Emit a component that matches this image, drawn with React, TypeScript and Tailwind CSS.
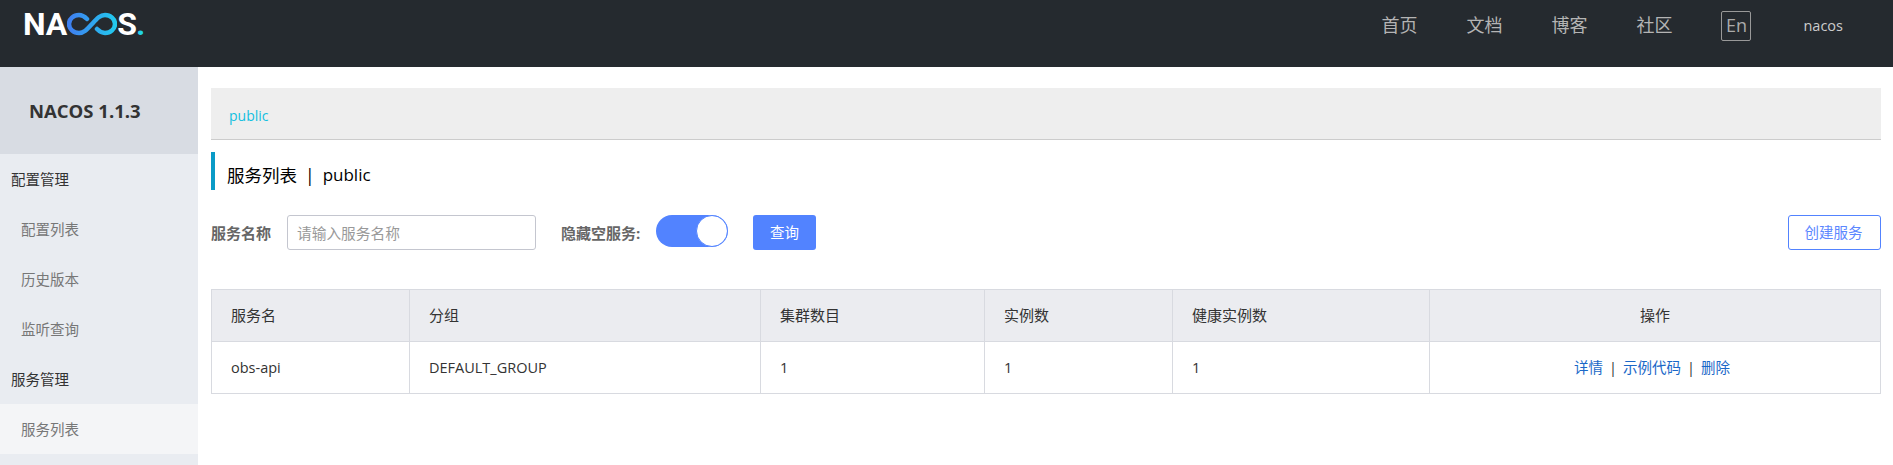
const NAV_ITEMS = ["首页", "文档", "博客", "社区"];

const COLUMNS = [
  { label: "服务名", value: "obs-api", width: "w-[198px]" },
  { label: "分组", value: "DEFAULT_GROUP", width: "w-[351px]" },
  { label: "集群数目", value: "1", width: "w-[224px]" },
  { label: "实例数", value: "1", width: "w-[188px]" },
  { label: "健康实例数", value: "1", width: "w-[257px]" },
];

function Logo() {
  return (
    <div className="flex h-[24px] items-center font-['Roboto',sans-serif] text-[32px] font-bold leading-none text-white">
      <span>NA</span>
      <svg width="50" height="24" viewBox="0 0 50 24" fill="none" className="shrink-0">
        <defs>
          <linearGradient id="loop" x1="0" x2="1" y1="0" y2="0">
            <stop offset="0" stopColor="#3f7ff0" />
            <stop offset="1" stopColor="#22c8ee" />
          </linearGradient>
        </defs>
        <path
          d="M20 7C17.500 4.500 15.500 3 12 3 6.500 3 2 7 2 12s4.500 9 10 9c5 0 8-3.500 13-9s8-9 13-9c5.500 0 10 4 10 9s-4.500 9-10 9c-3.500 0-5.500-1.500-8-4"
          stroke="url(#loop)"
          strokeWidth="4.500"
          strokeLinecap="round"
        />
      </svg>
      <span>S</span>
      <span className="-ml-[1px] text-[#22d3e6]">.</span>
    </div>
  );
}

function SideItem({ label, active }: { label: string; active?: boolean }) {
  return (
    <div className={`flex h-[50px] items-center pl-[21px] pt-[1px] text-[#777] ${active ? "bg-[#f4f5f7]" : ""}`}>
      {label}
    </div>
  );
}

function SideGroup({ label }: { label: string }) {
  return <div className="flex h-[50px] items-center pl-[11px] pt-[1px] text-[#333]">{label}</div>;
}

export default function App() {
  return (
    <div className="flex h-[465px] flex-col overflow-hidden bg-white font-['Open_Sans','Noto_Sans_CJK_SC',sans-serif] text-[14.500px] text-[#333]">
      <header className="flex h-[67px] shrink-0 items-start justify-between bg-[#252a2f]">
        <div className="ml-[23px] mt-[12px]">
          <Logo />
        </div>
        <nav className="flex h-[51px] items-center text-[#b4b4b4]">
          {NAV_ITEMS.map((item) => (
            <a key={item} className="mr-[49px] text-[18px]">
              {item}
            </a>
          ))}
          <span className="mr-[52px] flex h-[30px] w-[30px] items-center justify-center rounded-[2px] border border-[#999] text-[18px] text-[#aaa]">
            En
          </span>
          <span className="mr-[50px] text-[14.500px] text-[#ccc]">nacos</span>
        </nav>
      </header>

      <div className="flex min-h-0 flex-1">
        <aside className="w-[198px] shrink-0 bg-[#e9ecf1]">
          <div className="flex h-[87px] items-center bg-[#d8dce3] pl-[29px] text-[18.500px] font-bold">NACOS 1.1.3</div>
          <SideGroup label="配置管理" />
          <SideItem label="配置列表" />
          <SideItem label="历史版本" />
          <SideItem label="监听查询" />
          <SideGroup label="服务管理" />
          <SideItem label="服务列表" active />
        </aside>

        <main className="min-w-0 flex-1 pl-[13px] pr-[12px] pt-[21px]">
          <div className="flex h-[52px] items-center border-b border-[#ccc] bg-[#eee] pl-[18px] pt-[4px] text-[14px] text-[#12bfe0]">
            public
          </div>

          <h1 className="mt-[12px] flex h-[38px] items-center border-l-[4px] border-[#0a9bc7] pl-[12px] pt-[8px] text-[17.500px] font-normal text-black">
            服务列表<span className="mx-[8px] text-[#000]">|</span>
            <span className="text-[17px]">public</span>
          </h1>

          <div className="mt-[25px] flex h-[35px] items-start">
            <label className="mt-[7px] w-[76px] text-[15px] font-bold text-[#666]">服务名称</label>
            <input
              placeholder="请输入服务名称"
              className="h-[35px] w-[249px] rounded-[3px] border border-[#c4c6cf] pl-[9px] pr-[10px] text-[14.700px] outline-none placeholder:text-[#999]"
            />
            <label className="ml-[25px] mt-[7px] w-[95px] text-[15px] font-bold text-[#666]">隐藏空服务:</label>
            <div className="flex h-[32px] w-[72px] justify-end rounded-full bg-[#5283ff]">
              <span className="h-[32px] w-[32px] rounded-full border border-[#5283ff] bg-white" />
            </div>
            <button className="ml-[25px] h-[35px] w-[63px] rounded-[3px] bg-[#5283ff] text-white">查询</button>
            <button className="ml-auto h-[35px] w-[93px] rounded-[3px] border border-[#5283ff] pr-[2px] text-[#5b87ff]">
              创建服务
            </button>
          </div>

          <table className="mt-[39px] w-[1670px] table-fixed border-collapse">
            <thead>
              <tr className="h-[52px] bg-[#ebecf0]">
                {COLUMNS.map((col) => (
                  <th key={col.label} className={`${col.width} border border-[#d8dae0] pl-[19px] text-left text-[15px] font-normal`}>
                    {col.label}
                  </th>
                ))}
                <th className="border border-[#d8dae0] text-center text-[15px] font-normal">操作</th>
              </tr>
            </thead>
            <tbody>
              <tr className="h-[52px]">
                {COLUMNS.map((col) => (
                  <td key={col.label} className="border border-[#d8dae0] pl-[19px]">
                    {col.value}
                  </td>
                ))}
                <td className="border border-[#d8dae0] pr-[6px] text-center">
                  <a className="text-[#1a68c8]">详情</a>
                  <span className="mx-[6px]">|</span>
                  <a className="text-[#1a68c8]">示例代码</a>
                  <span className="mx-[6px]">|</span>
                  <a className="text-[#1a68c8]">删除</a>
                </td>
              </tr>
            </tbody>
          </table>
        </main>
      </div>
    </div>
  );
}
